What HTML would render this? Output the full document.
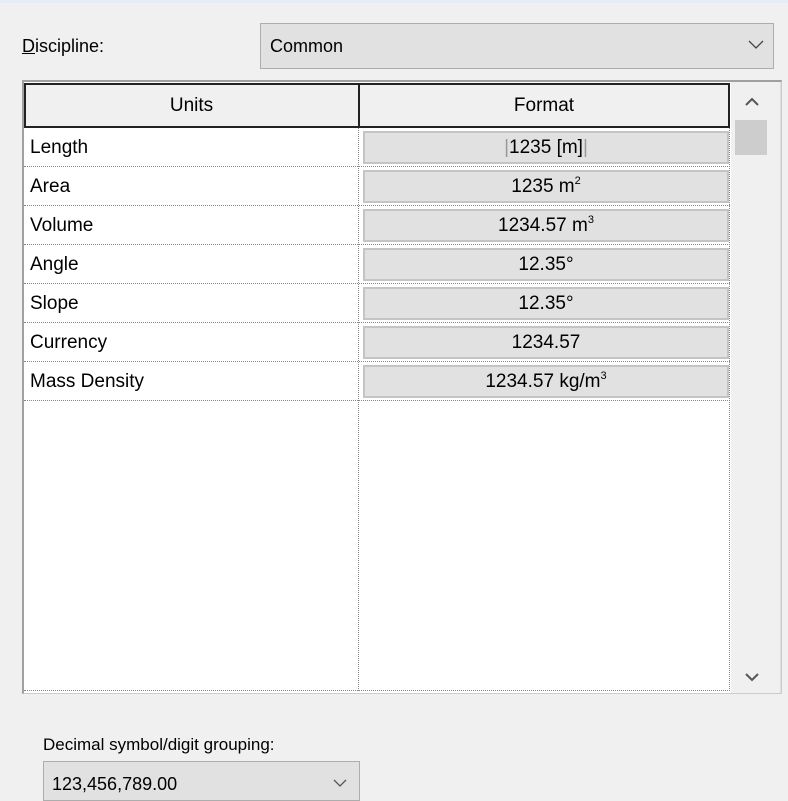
<!DOCTYPE html>
<html><head><style>
*{margin:0;padding:0;box-sizing:border-box}
body{width:788px;height:797px;background:#f0f0f0;position:relative;overflow:hidden;font-family:"Liberation Sans",sans-serif;color:#000}
.a{position:absolute}
.row{position:absolute;left:24px;width:706px;height:39px;border-bottom:1px dotted #888}
.row .l{position:absolute;left:6px;top:9px;font-size:19px;line-height:22px}
.btn{position:absolute;left:339px;width:366px;top:3px;height:33px;background:#e1e1e1;border:2px solid #c4c4c4;text-align:center;font-size:19px;line-height:29px}
sup{font-size:11px;line-height:0;position:relative;top:-8px;vertical-align:baseline}
</style></head><body>
<div class="a" style="left:0;top:0;width:788px;height:3px;background:#e6edf6"></div>
<div class="a" style="left:22px;top:36px;font-size:18px"><u>D</u>iscipline:</div>
<div class="a" style="left:260px;top:23px;width:514px;height:46px;background:#e1e1e1;border:1px solid #adadad"></div>
<div class="a" style="left:270px;top:36px;font-size:18px">Common</div>
<svg class="a" style="left:748px;top:40px" width="16" height="10"><path d="M1 1 L8 8 L15 1" fill="none" stroke="#444" stroke-width="1.3"/></svg>

<div class="a" style="left:22px;top:80px;width:760px;height:614px;background:#fff;border:1px solid #ccc;border-top:2px solid #a0a0a0;border-left:2px solid #a0a0a0"></div>
<div class="a" style="left:24px;top:83px;width:335px;height:45px;background:#f0f0f0;border:2px solid #222;border-right:1px solid #222"></div>
<div class="a" style="left:358px;top:83px;width:372px;height:45px;background:#f0f0f0;border:2px solid #222"></div>
<div class="a" style="left:24px;top:95px;width:335px;text-align:center;font-size:19px">Units</div>
<div class="a" style="left:358px;top:95px;width:372px;text-align:center;font-size:19px">Format</div>
<div class="a" style="left:358px;top:128px;width:0;height:563px;border-left:1px dotted #888"></div>
<div class="a" style="left:729px;top:128px;width:0;height:563px;border-left:1px dotted #888"></div>

<div class="row" style="top:128px"><div class="l">Length</div><div class="btn"><span style="color:#999">|</span>1235 [m]<span style="color:#999">|</span></div></div>
<div class="row" style="top:167px"><div class="l">Area</div><div class="btn">1235 m<sup>2</sup></div></div>
<div class="row" style="top:206px"><div class="l">Volume</div><div class="btn">1234.57 m<sup>3</sup></div></div>
<div class="row" style="top:245px"><div class="l">Angle</div><div class="btn">12.35°</div></div>
<div class="row" style="top:284px"><div class="l">Slope</div><div class="btn">12.35°</div></div>
<div class="row" style="top:323px"><div class="l">Currency</div><div class="btn">1234.57</div></div>
<div class="row" style="top:362px"><div class="l">Mass Density</div><div class="btn">1234.57 kg/m<sup>3</sup></div></div>
<div class="a" style="left:24px;top:690px;width:706px;border-top:1px dotted #888"></div>

<div class="a" style="left:731px;top:82px;width:50px;height:611px;background:#f0f0f0;border-right:1px solid #ddd"></div>
<div class="a" style="left:735px;top:120px;width:32px;height:35px;background:#cdcdcd"></div>
<svg class="a" style="left:745px;top:97px" width="14" height="9"><path d="M1 8 L7 2 L13 8" fill="none" stroke="#555" stroke-width="2"/></svg>
<svg class="a" style="left:745px;top:673px" width="14" height="9"><path d="M1 1 L7 7 L13 1" fill="none" stroke="#555" stroke-width="2"/></svg>

<div class="a" style="left:43px;top:735px;font-size:17px">Decimal symbol/digit <u>g</u>rouping:</div>
<div class="a" style="left:43px;top:761px;width:317px;height:40px;background:#e1e1e1;border:1px solid #adadad"></div>
<div class="a" style="left:52px;top:774px;font-size:18px">123,456,789.00</div>
<svg class="a" style="left:333px;top:779px" width="14" height="9"><path d="M1 1 L7 7 L13 1" fill="none" stroke="#555" stroke-width="1.3"/></svg>
</body></html>
